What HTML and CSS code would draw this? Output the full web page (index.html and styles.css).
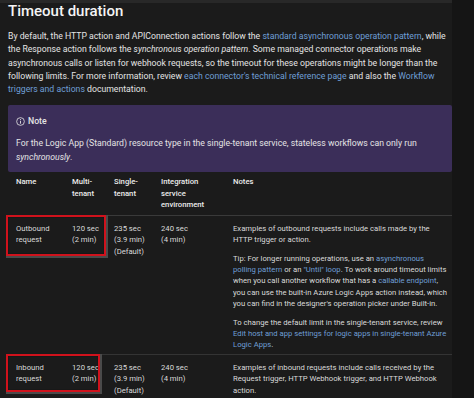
FILE: index.html
```html
<!DOCTYPE html>
<html>
<head>
    <title>Timeout duration</title>
    <link rel="stylesheet" href="styles.css">
</head>
<body>
    <div class="page">
        <h2>Timeout duration</h2>
        <p class="intro">By default, the HTTP action and APIConnection actions follow the <a href="#">standard asynchronous operation pattern</a>, while the Response action follows the <em>synchronous operation pattern</em>. Some managed connector operations make asynchronous calls or listen for webhook requests, so the timeout for these operations might be longer than the following limits. For more information, review <a href="#">each connector's technical reference page</a> and also the <a href="#">Workflow triggers and actions</a> documentation.</p>

        <div class="note">
            <p class="note-title">
                <svg class="note-icon" viewBox="0 0 10 10" width="9" height="9">
                    <circle cx="5" cy="5" r="4.3" fill="none" stroke="currentColor" stroke-width="0.9"/>
                    <line x1="5" y1="4.3" x2="5" y2="7.4" stroke="currentColor" stroke-width="1"/>
                    <circle cx="5" cy="2.9" r="0.6" fill="currentColor"/>
                </svg>
                Note
            </p>
            <p>For the Logic App (Standard) resource type in the single-tenant service, stateless workflows can only run <em>synchronously</em>.</p>
        </div>

        <table class="limits">
            <colgroup>
                <col class="c-name">
                <col class="c-multi">
                <col class="c-single">
                <col class="c-ise">
                <col class="c-notes">
            </colgroup>
            <thead>
                <tr>
                    <th>Name</th>
                    <th>Multi-<br>tenant</th>
                    <th>Single-<br>tenant</th>
                    <th>Integration<br>service<br>environment</th>
                    <th>Notes</th>
                </tr>
            </thead>
            <tbody>
                <tr>
                    <td class="marked">Outbound<br>request<span class="mark mark-outbound"></span></td>
                    <td>120 sec<br>(2 min)</td>
                    <td>235 sec<br>(3.9 min)<br>(Default)</td>
                    <td>240 sec<br>(4 min)</td>
                    <td>
                        <p>Examples of outbound requests include calls made by the HTTP trigger or action.</p>
                        <p>Tip: For longer running operations, use an <a href="#">asynchronous polling pattern</a> or an <a href="#">"Until" loop</a>. To work around timeout limits when you call another workflow that has a <a href="#">callable endpoint</a>, you can use the built-in Azure Logic Apps action instead, which you can find in the designer's operation picker under Built-in.</p>
                        <p>To change the default limit in the single-tenant service, review <a href="#">Edit host and app settings for logic apps in single-tenant Azure Logic Apps</a>.</p>
                    </td>
                </tr>
                <tr>
                    <td class="marked">Inbound<br>request<span class="mark mark-inbound"></span></td>
                    <td>120 sec<br>(2 min)</td>
                    <td>235 sec<br>(3.9 min)<br>(Default)</td>
                    <td>240 sec<br>(4 min)</td>
                    <td>
                        <p>Examples of inbound requests include calls received by the Request trigger, HTTP Webhook trigger, and HTTP Webhook action.</p>
                    </td>
                </tr>
            </tbody>
        </table>
    </div>
</body>
</html>
```

FILE: styles.css
```css
body {
    margin: 0;
    background-color: #151515;
    font-family: Roboto, Lato, sans-serif;
    color: #e4e4e4;
}
.page {
    width: 452px;
    min-height: 398px;
    background: #1b1b1b;
    border-top: 3px solid #282828;
    box-sizing: border-box;
    padding: 0 0 0 8px;
}
a {
    color: #6f9fd6;
    text-decoration: none;
}
h2 {
    margin: 0;
    font-size: 15px;
    font-weight: 500;
    line-height: 16px;
    color: #f4f4f4;
}
.intro {
    margin: 11px 0 0;
    width: 440px;
    font-size: 8.7px;
    line-height: 13.3px;
}
.note {
    margin: 9px 0 0;
    background: #3b2e59;
    border-radius: 2px;
    padding: 9px 8px 8px 8px;
    font-size: 8.7px;
    line-height: 14px;
}
.note p {
    margin: 0;
}
.note .note-title {
    margin-bottom: 8px;
    display: flex;
    align-items: center;
    gap: 3px;
    font-weight: 500;
}
.limits {
    margin-top: 4px;
    width: 444px;
    border-collapse: collapse;
    table-layout: fixed;
    font-size: 7.7px;
    line-height: 11.4px;
    color: #dadada;
}
.c-name { width: 56px; }
.c-multi { width: 42px; }
.c-single { width: 47px; }
.c-ise { width: 72px; }
.limits th {
    text-align: left;
    vertical-align: top;
    font-weight: 500;
    padding: 0 4px 4px 8px;
    border-bottom: 1px solid #3a3a3a;
    color: #ececec;
}
.limits td {
    vertical-align: top;
    padding: 7px 4px 3px 8px;
    border-bottom: 1px solid #343434;
}
.limits td p {
    margin: 0 0 7px;
}
.limits td p:last-child {
    margin-bottom: 0;
}
.limits td.marked {
    position: relative;
}
.mark {
    position: absolute;
    left: -2px;
    top: -1px;
    box-sizing: border-box;
    border: 2.5px solid #d0121c;
    box-shadow: 1px 1px 0 1px #4a4a4a, inset 0 0 1px #000;
}
.mark-outbound {
    width: 100px;
    height: 41px;
}
.mark-inbound {
    width: 94px;
    height: 38px;
}
```
